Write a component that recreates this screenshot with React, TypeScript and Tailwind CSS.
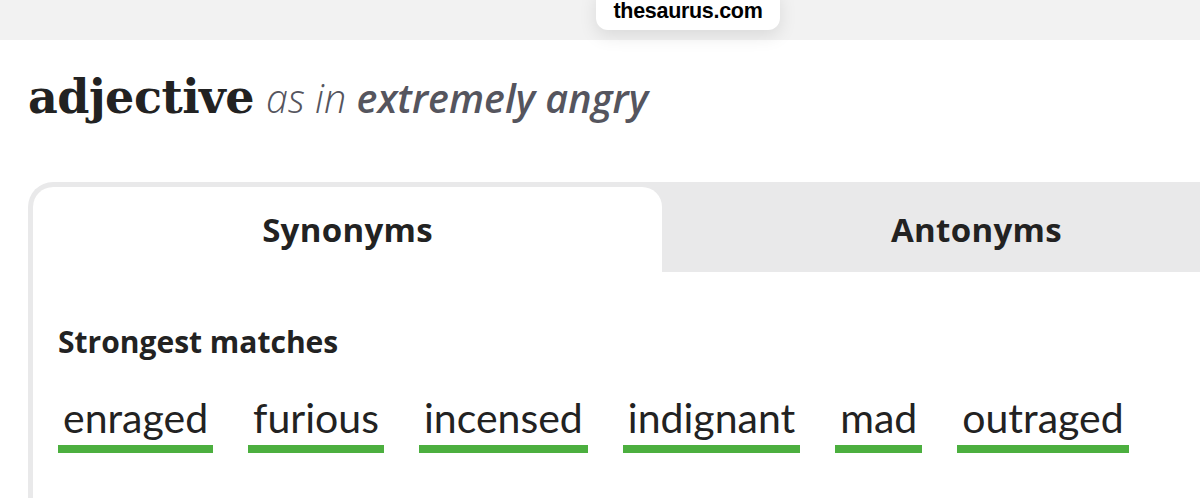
import React from 'react';

const words = ['enraged', 'furious', 'incensed', 'indignant', 'mad', 'outraged'];

export default function App() {
  return (
    <div className="relative w-[1200px] h-[498px] overflow-hidden bg-white text-[#222222] font-['Open_Sans',sans-serif]">
      {/* browser address bar */}
      <div className="h-[40px] bg-[#f2f2f2]" />
      <div className="absolute left-[596px] top-[-12px] w-[184px] h-[42px] rounded-[12px] bg-white shadow-[0_6px_18px_rgba(0,0,0,0.10)] flex items-end justify-center pb-[7px]">
        <span className="text-[21.5px] leading-[24px] font-bold text-black font-['Liberation_Sans',sans-serif] tracking-[-0.3px]">thesaurus.com</span>
      </div>

      {/* heading */}
      <div className="pl-[28px] pt-[27px] flex items-baseline gap-[12px] h-[100px]">
        <span className="text-[46px] leading-[60px] font-bold font-['DejaVu_Serif',serif] tracking-[-0.5px] text-[#222222]">adjective</span>
        <span className="text-[39.5px] leading-[60px] italic text-[#55555e]">
          <span className="font-light">as in </span>
          <span className="font-semibold">extremely angry</span>
        </span>
      </div>

      {/* tabs card */}
      <div className="mt-[42px] ml-[28px] w-[1263px] border-l-[5px] border-t-[5px] border-[#e9e9ea] rounded-tl-[25px] overflow-hidden">
        <div className="flex h-[85px] bg-[#e9e9ea]">
          <div className="w-[629px] bg-white rounded-t-[20px] flex items-center justify-center text-[33px] font-bold tracking-[0.3px]">
            Synonyms
          </div>
          <div className="w-[629px] flex items-center justify-center text-[33px] font-bold tracking-[0.3px]">
            Antonyms
          </div>
        </div>

        <div className="pl-[25px] pt-[52px] h-[300px]">
          <div className="text-[30px] leading-[36px] font-bold">Strongest matches</div>
          <div className="mt-[34px] flex gap-[35px] font-['Lato',sans-serif]">
            {words.map((w) => (
              <span
                key={w}
                className="px-[5px] text-[41px] leading-[48px] border-b-[8px] border-[#4caf3f] pb-[3px]"
              >
                {w}
              </span>
            ))}
          </div>
        </div>
      </div>
    </div>
  );
}
